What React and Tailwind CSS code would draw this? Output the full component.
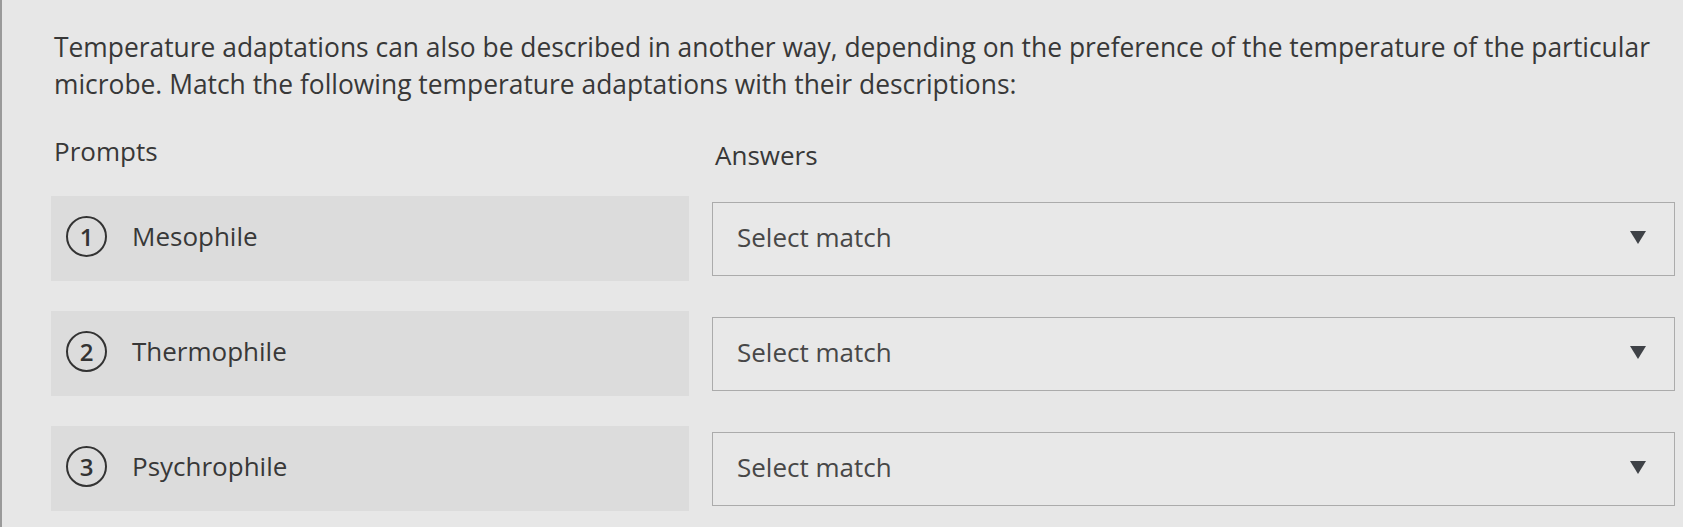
import React from 'react';

const prompts = ['Mesophile', 'Thermophile', 'Psychrophile'];

function MatchRow({ number, label }) {
  return (
    <div className="flex items-center gap-[23px]">
      <div className="flex h-[85px] w-[638px] items-center bg-[#dcdcdc] pb-[4px] pl-[15px]">
        <span className="flex h-[41px] w-[41px] items-center justify-center rounded-full border-2 border-[#333] text-[24px] font-semibold text-[#333]">
          {number}
        </span>
        <span className="ml-[25px] text-[26px] text-[#383838]">{label}</span>
      </div>
      <div className="flex h-[74px] w-[963px] items-center justify-between border border-[#ababab] bg-[#e8e8e8] pb-[3px] pl-[24px] pr-[28px]">
        <span className="text-[26px] text-[#474747]">Select match</span>
        <svg width="16" height="13" viewBox="0 0 16 13">
          <polygon points="0,0 16,0 8,13" fill="#3f4247" />
        </svg>
      </div>
    </div>
  );
}

export default function App() {
  return (
    <div
      className="min-h-[527px] w-full border-l-2 border-[#9a9a9a] bg-[#e7e7e7] pl-[52px] pt-[29px]"
      style={{ fontFamily: '"Open Sans", "Liberation Sans", sans-serif' }}
    >
      <p className="w-[1620px] text-[26.4px] leading-[37px] text-[#383838]">
        Temperature adaptations can also be described in another way, depending on the preference of the temperature of the particular microbe. Match the following temperature adaptations with their descriptions:
      </p>

      <div className="mt-[33px] flex gap-[23px]">
        <div className="w-[638px] text-[26px] leading-[30px] text-[#383838]">Prompts</div>
        <div className="mt-[4px] text-[26px] leading-[30px] text-[#383838]">Answers</div>
      </div>

      <div className="-ml-[3px] mt-[26px] flex flex-col gap-[30px]">
        {prompts.map((label, i) => (
          <MatchRow key={label} number={i + 1} label={label} />
        ))}
      </div>
    </div>
  );
}
